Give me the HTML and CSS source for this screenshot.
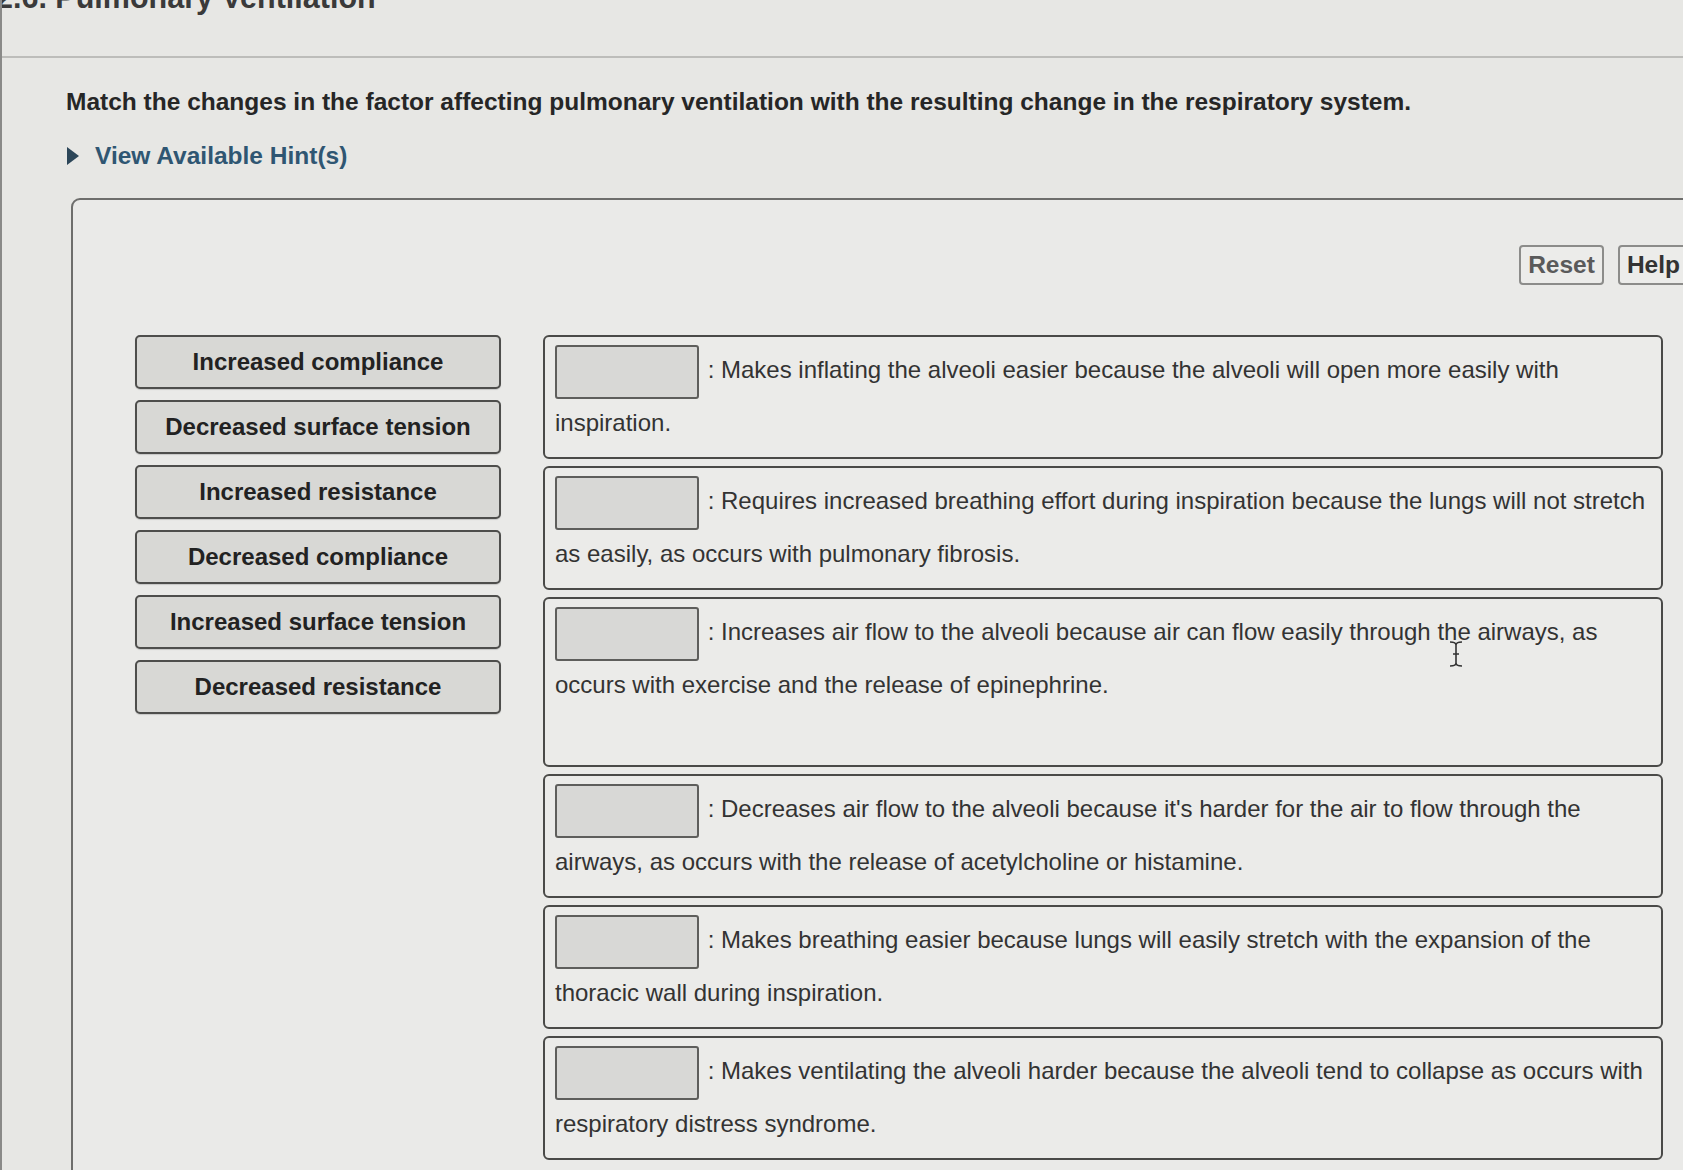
FILE: index.html
```html
<!DOCTYPE html>
<html lang="en">
<head>
    <meta charset="UTF-8">
    <meta name="viewport" content="width=device-width, initial-scale=1.0">
    <title>2.6. Pulmonary Ventilation</title>
    <link rel="stylesheet" href="styles.css">
</head>
<body>
    <div class="page">
        <header class="page-header">
            <h1 class="page-title">2.6. Pulmonary Ventilation</h1>
        </header>

        <p class="question">Match the changes in the factor affecting pulmonary ventilation with the resulting change in the respiratory system.</p>

        <div class="hint-toggle">
            <span class="hint-arrow"></span>
            <span class="hint-label">View Available Hint(s)</span>
        </div>

        <div class="activity">
            <div class="toolbar">
                <button class="tool-button">Reset</button>
                <button class="tool-button tool-button-dark">Help</button>
            </div>

            <div class="matching">
                <div class="choices">
                    <div class="choice">Increased compliance</div>
                    <div class="choice">Decreased surface tension</div>
                    <div class="choice">Increased resistance</div>
                    <div class="choice">Decreased compliance</div>
                    <div class="choice">Increased surface tension</div>
                    <div class="choice">Decreased resistance</div>
                </div>

                <div class="targets">
                    <div class="target">
                        <span class="slot"></span> : Makes inflating the alveoli easier because the alveoli will open more easily with inspiration.
                    </div>
                    <div class="target">
                        <span class="slot"></span> : Requires increased breathing effort during inspiration because the lungs will not stretch as easily, as occurs with pulmonary fibrosis.
                    </div>
                    <div class="target target-tall">
                        <span class="slot"></span> : Increases air flow to the alveoli because air can flow easily through the airways, as occurs with exercise and the release of epinephrine.
                        <svg class="cursor" width="16" height="26" viewBox="0 0 16 26">
                            <path d="M2 1 Q8 1 8 4 Q8 1 14 1 M8 4 V22 M2 25 Q8 25 8 22 Q8 25 14 25 M5 13 H11" fill="none" stroke="#333" stroke-width="1.6" />
                        </svg>
                    </div>
                    <div class="target">
                        <span class="slot"></span> : Decreases air flow to the alveoli because it's harder for the air to flow through the airways, as occurs with the release of acetylcholine or histamine.
                    </div>
                    <div class="target">
                        <span class="slot"></span> : Makes breathing easier because lungs will easily stretch with the expansion of the thoracic wall during inspiration.
                    </div>
                    <div class="target">
                        <span class="slot"></span> : Makes ventilating the alveoli harder because the alveoli tend to collapse as occurs with respiratory distress syndrome.
                    </div>
                </div>
            </div>
        </div>
    </div>
</body>
</html>
```

FILE: styles.css
```css
html, body {
    margin: 0;
    padding: 0;
    height: 100%;
    overflow: hidden;
}

body {
    background: #e7e7e4;
    font-family: "Liberation Sans", Arial, Helvetica, sans-serif;
    color: #2a2a2a;
}

.page {
    border-left: 2px solid #8a8a88;
    min-height: 100%;
    box-sizing: border-box;
}

.page-header {
    height: 56px;
    overflow: hidden;
    border-bottom: 2px solid #bdbdba;
}

.page-title {
    margin: -20px 0 0 -6px;
    font-size: 30.5px;
    font-weight: bold;
    color: #3a3a3a;
    white-space: nowrap;
}

.question {
    margin: 30px 0 0 64px;
    font-size: 24.5px;
    font-weight: bold;
    color: #262626;
    white-space: nowrap;
}

.hint-toggle {
    display: flex;
    align-items: center;
    gap: 16px;
    margin: 26px 0 0 65px;
}

.hint-arrow {
    width: 0;
    height: 0;
    border-top: 9px solid transparent;
    border-bottom: 9px solid transparent;
    border-left: 12px solid #2c4658;
}

.hint-label {
    font-size: 24.5px;
    font-weight: bold;
    color: #2f5672;
}

.activity {
    margin: 28px 0 0 69px;
    width: 1700px;
    height: 1100px;
    border: 2px solid #6e6e6c;
    border-radius: 9px 0 0 0;
    background: #eaeae8;
    box-sizing: border-box;
}

.toolbar {
    display: flex;
    justify-content: flex-end;
    gap: 14px;
    padding: 45px 80px 0 0;
}

.tool-button {
    height: 40px;
    padding: 0 7px;
    font-family: inherit;
    font-size: 24.5px;
    font-weight: bold;
    color: #5a5a5a;
    background: #ececea;
    border: 2px solid #8c8c8a;
    border-radius: 4px;
}

.tool-button-dark {
    color: #333;
}

.matching {
    display: flex;
    align-items: flex-start;
    gap: 42px;
    padding: 50px 0 0 62px;
}

.choices {
    display: flex;
    flex-direction: column;
    gap: 11px;
    width: 366px;
}

.choice {
    height: 54px;
    display: flex;
    align-items: center;
    justify-content: center;
    font-size: 24px;
    font-weight: bold;
    color: #222;
    background: #d8d8d5;
    border: 2px solid #4e4e4c;
    border-radius: 5px;
    box-sizing: border-box;
    box-shadow: 0 1px 1px rgba(0, 0, 0, 0.15);
}

.targets {
    display: flex;
    flex-direction: column;
    gap: 7px;
    width: 1120px;
}

.target {
    position: relative;
    padding: 8px 10px 10px;
    font-size: 24px;
    line-height: 48px;
    color: #333;
    background: #ebebe9;
    border: 2px solid #4a4a48;
    border-radius: 6px;
}

.target-tall {
    padding-bottom: 56px;
}

.slot {
    display: inline-block;
    width: 144px;
    height: 54px;
    vertical-align: middle;
    background: #d8d8d6;
    border: 2px solid #5e5e5c;
    border-radius: 3px;
    box-sizing: border-box;
    margin-right: 2px;
}

.cursor {
    position: absolute;
    left: 903px;
    top: 42px;
}
```
